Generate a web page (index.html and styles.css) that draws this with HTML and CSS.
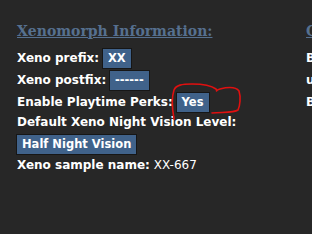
FILE: index.html
```html
<!DOCTYPE html>
<html lang="en">
<head>
    <meta charset="UTF-8">
    <title>Preferences</title>
    <link rel="stylesheet" href="styles.css">
</head>
<body>
    <div class="page">
        <div class="column">
            <h2 class="section-title">Xenomorph Information:</h2>
            <div class="pref-row has-btn"><b>Xeno prefix:</b> <a class="pref-btn">XX</a></div>
            <div class="pref-row has-btn"><b>Xeno postfix:</b> <a class="pref-btn">------</a></div>
            <div class="pref-row has-btn"><b>Enable Playtime Perks:</b> <a class="pref-btn">Yes</a></div>
            <div class="pref-row"><b>Default Xeno Night Vision Level:</b></div>
            <div class="pref-row has-btn tall"><a class="pref-btn">Half Night Vision</a></div>
            <div class="pref-row"><b>Xeno sample name:</b> XX-667</div>
        </div>
        <div class="column side">
            <h2 class="section-title">C</h2>
            <div class="pref-row has-btn"><b>B</b></div>
            <div class="pref-row has-btn"><b>u</b></div>
            <div class="pref-row has-btn"><b>B</b></div>
        </div>
    </div>

    <svg class="scribble" width="312" height="234" viewBox="0 0 312 234">
        <path d="M174 119 C172 108 172 96 174 90 C176 85 182 84 192 84 C202 84 212 86 216 89 C218 92 214 91 220 89 C228 87 236 87 239 91 C241 97 240 106 238 110 C234 113 222 112 212 113"
              fill="none" stroke="#e01010" stroke-width="1.6" stroke-linecap="round"/>
    </svg>
</body>
</html>
```

FILE: styles.css
```css
body {
    margin: 0;
    background: #272727;
    color: #ffffff;
    font-family: Verdana, "DejaVu Sans", sans-serif;
    font-size: 12px;
    overflow: hidden;
}
.page {
    display: flex;
    gap: 66px;
    padding: 21px 0 0 17px;
    white-space: nowrap;
}
.column {
    width: 223px;
    flex-shrink: 0;
}
.column.side {
    width: 6px;
    overflow: hidden;
}
.section-title {
    margin: 0 0 6px 0;
    font-family: "DejaVu Serif", serif;
    font-size: 14px;
    font-weight: bold;
    color: #56708f;
    text-decoration: underline;
    line-height: 20px;
}
.pref-row {
    height: 19px;
    line-height: 19px;
}
.pref-row.has-btn {
    height: 22px;
    line-height: 22px;
}
.pref-row.tall {
    height: 24px;
    padding-top: 1px;
    line-height: 22px;
    box-sizing: border-box;
}
.pref-btn {
    display: inline-block;
    background: #40628a;
    border: 1px solid #161616;
    color: #ffffff;
    font-size: 11.5px;
    font-weight: bold;
    padding: 0 5px;
    line-height: 19px;
    margin-left: -1px;
}
.scribble {
    position: absolute;
    left: 0;
    top: 0;
    pointer-events: none;
}
```
